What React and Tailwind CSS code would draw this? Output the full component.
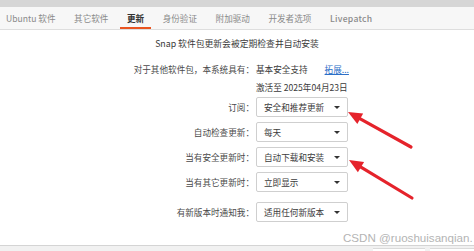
import React from "react";

const tabs = ["Ubuntu 软件", "其它软件", "更新", "身份验证", "附加驱动", "开发者选项", "Livepatch"];

function Arrow({ tail, tip }) {
  const dx = tip[0] - tail[0];
  const dy = tip[1] - tail[1];
  const len = Math.hypot(dx, dy);
  const ux = dx / len;
  const uy = dy / len;
  const hl = 14;
  const hw = 6;
  const bx = tip[0] - hl * ux;
  const by = tip[1] - hl * uy;
  const px = -uy * hw;
  const py = ux * hw;
  const pts = `${tip[0]},${tip[1]} ${bx + px},${by + py} ${bx - px},${by - py}`;
  return (
    <g>
      <line x1={tail[0]} y1={tail[1]} x2={bx + ux * 2} y2={by + uy * 2} stroke="#e5232b" strokeWidth="3.2" strokeLinecap="round" />
      <polygon points={pts} fill="#e5232b" />
    </g>
  );
}

function Select({ value }) {
  return (
    <div className="flex h-[20px] w-[92px] items-center justify-between rounded-[2px] border border-[#cfcfcf] bg-white pl-[7px] pr-[7px] text-[#3c3c3c]">
      <span>{value}</span>
      <span className="h-0 w-0 border-l-[3px] border-r-[3px] border-t-[3px] border-l-transparent border-r-transparent border-t-[#333]" />
    </div>
  );
}

export default function App() {
  const rows = [
    ["订阅：", "安全和推荐更新"],
    ["自动检查更新：", "每天"],
    ["当有安全更新时：", "自动下载和安装"],
    ["当有其它更新时：", "立即显示"],
  ];
  return (
    <div
      className="relative flex h-[251px] w-[474px] flex-col overflow-hidden bg-white text-[8.6px] leading-[12px]"
      style={{ fontFamily: '"Noto Sans CJK SC", "Noto Sans", sans-serif' }}
    >
      <div className="h-[7px] bg-[#d6d6d6]" />
      <div className="flex h-[23px] items-stretch border-b border-[#dedede] bg-[#f7f7f7]">
        {tabs.map((t, i) => (
          <div
            key={t}
            className={
              "mr-[4.5px] flex items-center px-[7px] " +
              (i === 0 ? "pl-[6px] " : "") +
              (t === "更新"
                ? "border-b-[2px] border-[#e95420] pt-[2px] font-bold text-[#333]"
                : "text-[#8a8a8a]") +
              (t === "Livepatch" ? " font-medium tracking-[0.3px]" : "")
            }
          >
            {t}
          </div>
        ))}
      </div>

      <div className="flex flex-1 flex-col text-[#4a4a4a]">
        <div className="mt-[8px] text-center text-[8.8px] text-[#3a3a3a]">Snap 软件包更新会被定期检查并自动安装</div>

        <div className="mt-[13px] grid grid-cols-[254px_auto] gap-x-[2px]">
          <div className="text-right">对于其他软件包，本系统具有：</div>
          <div className="flex">
            <span className="text-[#3a3a3a]">基本安全支持</span>
            <span className="ml-[17px] text-[#2c6fc7] underline">拓展...</span>
          </div>
          <div />
          <div className="mt-[6px] text-[#3a3a3a]">激活至 2025年04月23日</div>
        </div>

        <div className="mt-[4px] flex flex-col gap-[5px]">
          {rows.map(([l, v]) => (
            <div key={l} className="grid grid-cols-[254px_auto] items-center gap-x-[2px]">
              <div className="text-right">{l}</div>
              <Select value={v} />
            </div>
          ))}
          <div className="mt-[5px] grid grid-cols-[254px_auto] items-center gap-x-[2px]">
            <div className="text-right">有新版本时通知我：</div>
            <Select value="适用任何新版本" />
          </div>
        </div>
      </div>

      <div className="flex h-[6px] items-end gap-[5px] border-t border-[#d4d4d4] bg-[#f1f1f1] pl-[373px]">
        <div className="h-[3px] w-[52px] border-t border-[#dadada] bg-white" />
        <div className="h-[3px] w-[44px] border-t border-[#dadada] bg-white" />
      </div>

      <div
        className="absolute left-[343px] top-[231px] text-[11.6px] leading-[14px] text-[#b4b4b4]"
        style={{ fontFamily: '"Liberation Sans", Arial, sans-serif' }}
      >
        CSDN @ruoshuisanqian.
      </div>

      <svg className="pointer-events-none absolute left-0 top-0" width="474" height="251">
        <Arrow tail={[411, 147]} tip={[348, 112]} />
        <Arrow tail={[412, 198]} tip={[349, 160]} />
      </svg>
    </div>
  );
}
